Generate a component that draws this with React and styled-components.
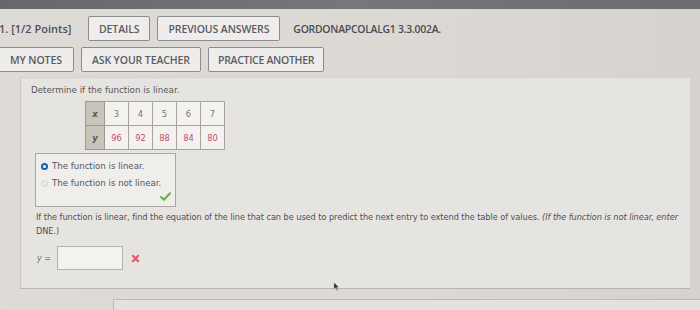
import React from "react";
import styled, { createGlobalStyle } from "styled-components";

const GlobalStyle = createGlobalStyle`
  html, body {
    margin: 0;
    padding: 0;
    background: #dcd9d4;
    width: 700px;
    height: 310px;
    overflow: hidden;
  }
`;

const xs = [3, 4, 5, 6, 7];
const ys = [96, 92, 88, 84, 80];

const App = () => {
  return (
    <StPage>
      <GlobalStyle />
      <StTopBar />
      <StHeaderRow>
        <StPoints>1. [1/2 Points]</StPoints>
        <StBtn>DETAILS</StBtn>
        <StBtn>PREVIOUS ANSWERS</StBtn>
        <StCode>GORDONAPCOLALG1 3.3.002A.</StCode>
      </StHeaderRow>
      <StHeaderRow $second>
        <StBtn $first>MY NOTES</StBtn>
        <StBtn>ASK YOUR TEACHER</StBtn>
        <StBtn $tight>PRACTICE ANOTHER</StBtn>
      </StHeaderRow>

      <StPanel>
        <StPrompt>Determine if the function is linear.</StPrompt>
        <StTable>
          <tbody>
            <tr>
              <StHeadCell>x</StHeadCell>
              {xs.map((v) => (
                <StCell key={v}>{v}</StCell>
              ))}
            </tr>
            <tr>
              <StHeadCell>y</StHeadCell>
              {ys.map((v) => (
                <StCell key={v} $answer>
                  {v}
                </StCell>
              ))}
            </tr>
          </tbody>
        </StTable>

        <StOptions>
          <StOption>
            <StRadio $checked />
            The function is linear.
          </StOption>
          <StOption>
            <StRadio />
            The function is not linear.
          </StOption>
          <StCheck viewBox="0 0 12 10">
            <path d="M1 5.5 L4.3 8.6 L11 1.4" fill="none" stroke="#6fae4e" strokeWidth="2.2" strokeLinecap="round" strokeLinejoin="round" />
          </StCheck>
        </StOptions>

        <StParagraph>
          If the function is linear, find the equation of the line that can be used to predict the next entry to extend the table of values.{" "}
          <em>(If the function is not linear, enter</em> DNE.)
        </StParagraph>

        <StAnswerRow>
          <StVar>
            <em>y</em> =
          </StVar>
          <StInput />
          <StCross viewBox="0 0 10 10">
            <path d="M2 2 L8 8 M8 2 L2 8" stroke="#e0566c" strokeWidth="2.4" strokeLinecap="round" />
          </StCross>
        </StAnswerRow>

        <StCursor viewBox="0 0 8 12">
          <path d="M1 1 L1 9.5 L3 7.6 L4.6 11 L5.8 10.4 L4.3 7.2 L7 7.1 Z" fill="#2a2a2e" stroke="#f2f2f2" strokeWidth="0.6" />
        </StCursor>
      </StPanel>

      <StNextBox />
    </StPage>
  );
};

const StPage = styled.div`
  position: relative;
  width: 700px;
  height: 310px;
  overflow: hidden;
  display: flex;
  flex-direction: column;
  background: linear-gradient(90deg, #dedbd7 0%, #dcd9d5 60%, #d6d3cf 100%);
  font-family: "DejaVu Sans", Verdana, sans-serif;

  & > * {
    flex-shrink: 0;
  }
`;

const StTopBar = styled.div`
  height: 9px;
  background: linear-gradient(90deg, #67666c 0%, #77767c 50%, #6c6b71 100%);
`;

const StHeaderRow = styled.div`
  display: flex;
  align-items: center;
  gap: 7px;
  margin-top: ${(p) => (p.$second ? "6px" : "7px")};
  height: 25px;
`;

const StPoints = styled.div`
  font-family: "Open Sans", sans-serif;
  font-weight: 600;
  font-size: 11px;
  color: #4e4e54;
  width: 82px;
  margin-left: -1px;
  white-space: nowrap;
`;

const StBtn = styled.div`
  height: 25px;
  box-sizing: border-box;
  display: flex;
  align-items: center;
  padding: 0 ${(p) => (p.$first ? "11px" : p.$tight ? "9px" : "10px")};
  margin-left: ${(p) => (p.$first ? "-2px" : "0")};
  border: 1.5px solid #8d8c91;
  border-radius: 2px;
  background: #eeedeb;
  font-family: "Open Sans", sans-serif;
  font-weight: 600;
  font-size: 10.5px;
  color: #5b5b62;
  letter-spacing: ${(p) => (p.$tight ? "-0.3px" : "-0.1px")};
  white-space: nowrap;
`;

const StCode = styled.div`
  margin-left: 6px;
  font-family: "Open Sans", sans-serif;
  font-weight: 600;
  font-size: 10.4px;
  color: #4a4a50;
  letter-spacing: -0.25px;
  white-space: nowrap;
`;

const StPanel = styled.div`
  position: relative;
  margin: 5px 10px 0 20px;
  height: 212px;
  box-sizing: border-box;
  border-left: 1px solid #cbc9c4;
  border-top: 1px solid #d3d1cc;
  border-bottom: 1px solid #b8b6b2;
  background: #e6e4e0;
  padding: 7px 0 0 10px;
  display: flex;
  flex-direction: column;
  align-items: flex-start;
`;

const StPrompt = styled.div`
  font-size: 8.7px;
  color: #56565c;
`;

const StTable = styled.table`
  border-collapse: collapse;
  margin: 6px 0 0 54px;
  background: #f3f2ef;
`;

const StHeadCell = styled.td`
  width: 18px;
  height: 23px;
  padding: 0;
  text-align: center;
  background: #c9c4ba;
  border: 1px solid #9d9a94;
  font-style: italic;
  font-weight: bold;
  font-size: 8.5px;
  color: #55555a;
`;

const StCell = styled.td`
  width: 23px;
  height: 23px;
  padding: 0;
  text-align: center;
  border: 1px solid #a6a39d;
  font-size: 8.3px;
  color: ${(p) => (p.$answer ? "#c24d6c" : "#77777c")};
`;

const StOptions = styled.div`
  position: relative;
  margin: 3px 0 0 4px;
  width: 141px;
  height: 54px;
  box-sizing: border-box;
  border: 1px solid #a8a7a2;
  background: #efeeeb;
  padding: 7px 0 0 5px;
  display: flex;
  flex-direction: column;
  gap: 7px;
`;

const StOption = styled.div`
  display: flex;
  align-items: center;
  gap: 4px;
  font-size: 8.6px;
  color: #56565c;
  white-space: nowrap;
`;

const StRadio = styled.span`
  width: 7px;
  height: 7px;
  border-radius: 50%;
  box-sizing: border-box;
  border: ${(p) => (p.$checked ? "2px solid #1d5f9f" : "1px solid #d2d1cd")};
  background: ${(p) => (p.$checked ? "#ffffff" : "#ecebe8")};
`;

const StCheck = styled.svg`
  position: absolute;
  right: 4px;
  bottom: 5px;
  width: 11px;
  height: 9px;
`;

const StParagraph = styled.div`
  margin: 3px 0 0 5px;
  width: 645px;
  font-size: 8.2px;
  line-height: 14px;
  color: #4f4f55;
  letter-spacing: -0.05px;
`;

const StAnswerRow = styled.div`
  display: flex;
  align-items: center;
  margin: 8px 0 0 6px;
  gap: 6px;
`;

const StVar = styled.div`
  font-size: 8px;
  color: #6a6a70;
  width: 14px;
  white-space: nowrap;
`;

const StInput = styled.div`
  width: 66px;
  height: 24px;
  box-sizing: border-box;
  border: 1px solid #b2b0ab;
  background: #f3f2f0;
`;

const StCross = styled.svg`
  width: 9px;
  height: 9px;
  margin-left: 2px;
`;

const StCursor = styled.svg`
  position: absolute;
  left: 312px;
  top: 203px;
  width: 7px;
  height: 11px;
`;

const StNextBox = styled.div`
  margin: 10px 0 0 113px;
  height: 30px;
  border: 1px solid #bdbbb7;
  border-right: none;
  background: #e4e2de;
`;

export default App;
